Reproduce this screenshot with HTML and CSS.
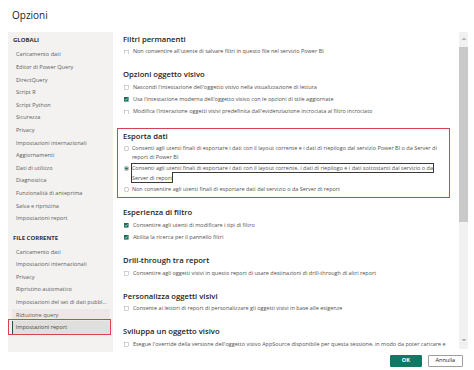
FILE: index.html
```html
<!DOCTYPE html>
<html lang="it">
<head>
<meta charset="utf-8">
<title>Opzioni</title>
<link rel="stylesheet" href="styles.css">
</head>
<body>
<div class="dialog">
  <header class="title">Opzioni</header>
  <div class="main">
    <nav class="sidebar">
      <div class="nav-head">GLOBALI</div>
      <div class="nav-item">Caricamento dati</div>
      <div class="nav-item">Editor di Power Query</div>
      <div class="nav-item">DirectQuery</div>
      <div class="nav-item">Script R</div>
      <div class="nav-item">Script Python</div>
      <div class="nav-item">Sicurezza</div>
      <div class="nav-item">Privacy</div>
      <div class="nav-item">Impostazioni internazionali</div>
      <div class="nav-item">Aggiornamenti</div>
      <div class="nav-item">Dati di utilizzo</div>
      <div class="nav-item">Diagnostica</div>
      <div class="nav-item">Funzionalità di anteprima</div>
      <div class="nav-item">Salva e ripristina</div>
      <div class="nav-item">Impostazioni report</div>
      <div class="nav-head nav-head-2">FILE CORRENTE</div>
      <div class="nav-item">Caricamento dati</div>
      <div class="nav-item">Impostazioni internazionali</div>
      <div class="nav-item">Privacy</div>
      <div class="nav-item">Ripristino automatico</div>
      <div class="nav-item">Impostazioni del set di dati pubbl...</div>
      <div class="nav-item hover">Riduzione query</div>
      <div class="nav-item selected">Impostazioni report</div>
    </nav>
    <div class="panel">
      <div class="scroll">
        <section class="sec">
          <h2>Filtri permanenti</h2>
          <div class="opt"><svg class="ctl" viewBox="0 0 10 10"><rect x="0.5" y="0.5" width="9" height="9" fill="#fff" stroke="#a19f9d"/></svg><span>Non consentire all'utente di salvare filtri in questo file nel servizio Power BI</span></div>
        </section>
        <section class="sec">
          <h2>Opzioni oggetto visivo</h2>
          <div class="opt"><svg class="ctl" viewBox="0 0 10 10"><rect x="0.5" y="0.5" width="9" height="9" fill="#fff" stroke="#a19f9d"/></svg><span>Nascondi l'intestazione dell'oggetto visivo nella visualizzazione di lettura</span></div>
          <div class="opt"><svg class="ctl" viewBox="0 0 10 10"><rect x="0" y="0" width="10" height="10" fill="#17705a"/><polyline points="2.2,5.2 4.2,7.2 8,3" fill="none" stroke="#fff" stroke-width="1.4"/></svg><span>Usa l'intestazione moderna dell'oggetto visivo con le opzioni di stile aggiornate</span></div>
          <div class="opt"><svg class="ctl" viewBox="0 0 10 10"><rect x="0.5" y="0.5" width="9" height="9" fill="#fff" stroke="#a19f9d"/></svg><span>Modifica l'interazione oggetti visivi predefinita dall'evidenziazione incrociata al filtro incrociato</span></div>
        </section>
        <section class="sec highlight">
          <h2>Esporta dati</h2>
          <div class="opt radio"><svg class="ctl" viewBox="0 0 10 10"><circle cx="5" cy="5" r="4.4" fill="#fff" stroke="#8a8886"/></svg><span>Consenti agli utenti finali di esportare i dati con il layout corrente e i dati di riepilogo dal servizio Power BI o da Server di<br>report di Power BI</span></div>
          <div class="opt radio"><svg class="ctl" viewBox="0 0 10 10"><circle cx="5" cy="5" r="4.4" fill="#fff" stroke="#6b6a68"/><circle cx="5" cy="5" r="2.6" fill="#17614f"/></svg><span><span class="focus">Consenti agli utenti finali di esportare i dati con il layout corrente, i dati di riepilogo e i dati sottostanti dal servizio o da<br>Server di report</span></span></div>
          <div class="opt radio"><svg class="ctl" viewBox="0 0 10 10"><circle cx="5" cy="5" r="4.4" fill="#fff" stroke="#8a8886"/></svg><span>Non consentire agli utenti finali di esportare dati dal servizio o da Server di report</span></div>
        </section>
        <section class="sec">
          <h2>Esperienza di filtro</h2>
          <div class="opt"><svg class="ctl" viewBox="0 0 10 10"><rect x="0" y="0" width="10" height="10" fill="#17705a"/><polyline points="2.2,5.2 4.2,7.2 8,3" fill="none" stroke="#fff" stroke-width="1.4"/></svg><span>Consentire agli utenti di modificare i tipi di filtro</span></div>
          <div class="opt"><svg class="ctl" viewBox="0 0 10 10"><rect x="0" y="0" width="10" height="10" fill="#17705a"/><polyline points="2.2,5.2 4.2,7.2 8,3" fill="none" stroke="#fff" stroke-width="1.4"/></svg><span>Abilita la ricerca per il pannello filtri</span></div>
        </section>
        <section class="sec">
          <h2>Drill-through tra report</h2>
          <div class="opt"><svg class="ctl" viewBox="0 0 10 10"><rect x="0.5" y="0.5" width="9" height="9" fill="#fff" stroke="#a19f9d"/></svg><span>Consentire agli oggetti visivi in questo report di usare destinazioni di drill-through di altri report</span></div>
        </section>
        <section class="sec">
          <h2>Personalizza oggetti visivi</h2>
          <div class="opt"><svg class="ctl" viewBox="0 0 10 10"><rect x="0.5" y="0.5" width="9" height="9" fill="#fff" stroke="#a19f9d"/></svg><span>Consente ai lettori di report di personalizzare gli oggetti visivi in base alle esigenze</span></div>
        </section>
        <section class="sec">
          <h2>Sviluppa un oggetto visivo</h2>
          <div class="opt"><svg class="ctl" viewBox="0 0 10 10"><rect x="0.5" y="0.5" width="9" height="9" fill="#fff" stroke="#a19f9d"/></svg><span>Esegue l'override della versione dell'oggetto visivo AppSource disponibile per questa sessione, in modo da poter caricare e</span></div>
        </section>
      </div>
      <div class="scrollbar">
        <div class="sb-up"><svg viewBox="0 0 10 10"><polyline points="2.5,6.5 5,4 7.5,6.5" fill="none" stroke="#555" stroke-width="1.4"/></svg></div>
        <div class="sb-thumb"></div>
        <div class="sb-track"><svg viewBox="0 0 10 10"><polyline points="2.5,3.5 5,6 7.5,3.5" fill="none" stroke="#555" stroke-width="1.4"/></svg></div>
      </div>
    </div>
  </div>
  <footer class="footer">
    <button class="btn primary">OK</button>
    <button class="btn">Annulla</button>
  </footer>
</div>
</body>
</html>
```
FILE: styles.css
```css
* { box-sizing: border-box; }
html, body { margin: 0; padding: 0; background: #fff; }
body { font-family: "Open Sans", "Noto Sans", sans-serif; color: #252423; }
.dialog { width: 474px; height: 370px; overflow: hidden; }

.title {
  height: 32px;
  padding: 8.5px 0 0 12px;
  font-size: 10px;
  line-height: 12px;
  font-weight: 500;
  color: #252423;
}

.main { display: flex; height: 320px; }

.sidebar {
  margin-left: 8px;
  width: 105px;
  height: 320px;
  background: #f3f2f1;
  padding: 2.4px 3px 0 4px;
  font-size: 5.6px;
  line-height: 12.6px;
  color: #605e5c;
}
.nav-head {
  padding-left: 1px;
  font-size: 6px;
  font-weight: 700;
  color: #323130;
  margin-bottom: 1.4px;
}
.nav-head-2 { margin-top: 7px; }
.nav-item { padding-left: 4px; white-space: nowrap; overflow: hidden; }
.nav-item.hover { background: #eae9e8; }
.nav-item.selected {
  position: relative;
  overflow: visible;
  background: #e1dfdd;
  padding-left: 2.7px;
  border-left: 1.3px solid #1f4f49;
  color: #484644;
}
.nav-item.selected::after {
  content: "";
  position: absolute;
  top: -2.7px; bottom: -1.4px; left: -4.9px; right: -1px;
  border: 1.5px solid #d8434d;
}

.panel { flex: 1; display: flex; height: 317px; }
.scroll {
  width: 346.3px;
  height: 317px;
  overflow: hidden;
  padding: 1px 10px 0 10px;
}

.sec { margin-bottom: 11.85px; }
.sec h2 {
  margin: 0 0 2.35px 0;
  font-size: 7.7px;
  line-height: 12px;
  font-weight: 600;
  color: #252423;
}
.opt {
  display: flex;
  align-items: flex-start;
  font-size: 5.5px;
  line-height: 9.3px;
  color: #53514f;
  white-space: nowrap;
  margin-bottom: 3px;
}
.opt:last-child { margin-bottom: 0; }
.ctl { flex: none; width: 4.6px; height: 4.6px; margin: 2.35px 4px 0 1.3px; }
.opt.radio { margin-bottom: 1.7px; }
.opt.radio .ctl { width: 5px; height: 5px; margin: 2.15px 3.2px 0 0.7px; }
.opt.radio:last-child { margin-bottom: 0; }

.highlight { position: relative; margin-top: 13px; margin-bottom: 12.55px; }
.highlight::after {
  content: "";
  position: absolute;
  top: -1.3px; bottom: -4.2px; left: -6.3px; right: -0.7px;
  border: 1.5px solid #d8434d;
}
.focus { outline: 1px solid #3b3a39; outline-offset: 0; }

.scrollbar {
  width: 8.7px;
  height: 317px;
  display: flex;
  flex-direction: column;
  background: #f1f1f1;
}
.sb-up { height: 14.7px; display: flex; align-items: center; justify-content: center; }
.sb-up svg, .sb-track svg { width: 6px; height: 6px; }
.sb-thumb { height: 175px; background: #c9c9c9; }
.sb-track { flex: 1; display: flex; align-items: flex-end; justify-content: center; padding-bottom: 6px; }

.footer {
  display: flex;
  justify-content: flex-end;
  gap: 6.3px;
  padding: 3px 11.3px 0 0;
}
.btn {
  font-family: inherit;
  height: 11.7px;
  padding: 0;
  font-size: 5.6px;
  line-height: 9px;
  border-radius: 1px;
  background: #fff;
  border: 1px solid #a19f9d;
  color: #252423;
  width: 34.7px;
}
.btn.primary {
  width: 31.7px;
  background: #117865;
  border-color: #117865;
  color: #fff;
  font-weight: 700;
}
```
